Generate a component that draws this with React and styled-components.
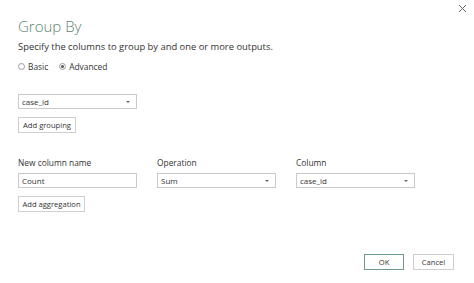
import React from "react";
import styled, { createGlobalStyle } from "styled-components";

const Global = createGlobalStyle`
  html, body { margin: 0; padding: 0; background: #fff; }
  body { font-family: "Open Sans", "Noto Sans", sans-serif; color: #333; }
`;

const Dialog = styled.div`
  position: relative;
  width: 474px;
  height: 283px;
  box-sizing: border-box;
  padding: 16px 20px 0 18px;
  display: flex;
  flex-direction: column;
  background: #fff;
`;

const Close = styled.button`
  position: absolute;
  top: 2px;
  right: 6px;
  width: 12px;
  height: 12px;
  padding: 0;
  border: 0;
  background: none;
  display: flex;
  align-items: center;
  justify-content: center;
`;

const Title = styled.h1`
  margin: 0;
  font-size: 15px;
  line-height: 20px;
  font-weight: 300;
  color: #5e8370;
`;

const Desc = styled.p`
  margin: 5px 0 0;
  font-size: 9.4px;
  line-height: 12px;
  color: #333;
`;

const RadioRow = styled.div`
  margin-top: 7px;
  display: flex;
  gap: 11px;
  align-items: center;
  height: 12px;
`;

const RadioLabel = styled.label`
  display: flex;
  align-items: center;
  gap: 3px;
  font-size: 8.4px;
  color: #333;
`;

const RadioDot = styled.span`
  width: 5px;
  height: 5px;
  border-radius: 50%;
  border: 1px solid #9a9a9a;
  box-sizing: content-box;
  display: flex;
  align-items: center;
  justify-content: center;
  &::after {
    content: "";
    width: 3px;
    height: 3px;
    border-radius: 50%;
    background: ${(p) => (p.$checked ? "#555" : "transparent")};
  }
`;

const Field = styled.div`
  width: 119px;
  height: 15px;
  box-sizing: border-box;
  border: 1px solid #c9c9c9;
  background: #fff;
  display: flex;
  align-items: center;
  justify-content: space-between;
  padding: 0 6px 0 3px;
  font-size: 8px;
  color: #333;
`;

const Caret = styled.span`
  width: 0;
  height: 0;
  border-left: 2px solid transparent;
  border-right: 2px solid transparent;
  border-top: 2px solid #666;
`;

const Button = styled.button`
  height: 16px;
  box-sizing: border-box;
  border: 1px solid ${(p) => (p.$primary ? "#6f9a85" : "#cfcfcf")};
  background: #fff;
  font-family: inherit;
  font-size: 7.6px;
  color: #333;
  padding: 0;
  white-space: nowrap;
  width: ${(p) => p.$w}px;
  display: flex;
  align-items: center;
  justify-content: center;
  align-self: flex-start;
`;

const GroupSection = styled.div`
  margin-top: 22px;
  display: flex;
  flex-direction: column;
  gap: 8px;
`;

const AggGrid = styled.div`
  margin-top: 24px;
  display: grid;
  grid-template-columns: 119px 119px 119px;
  column-gap: 20px;
  row-gap: 5px;
`;

const Label = styled.div`
  font-size: 8.4px;
  line-height: 11px;
  color: #333;
`;

const AggButtonRow = styled.div`
  margin-top: 8px;
  display: flex;
`;

const Footer = styled.div`
  margin-top: auto;
  margin-bottom: 13px;
  display: flex;
  justify-content: flex-end;
  gap: 9px;
`;

export default function App() {
  return (
    <>
      <Global />
      <Dialog>
        <Close aria-label="Close">
          <svg width="9" height="9" viewBox="0 0 9 9">
            <path d="M1 1 L8 8 M8 1 L1 8" stroke="#666" strokeWidth="1" />
          </svg>
        </Close>
        <Title>Group By</Title>
        <Desc>Specify the columns to group by and one or more outputs.</Desc>
        <RadioRow>
          <RadioLabel>
            <RadioDot />
            Basic
          </RadioLabel>
          <RadioLabel>
            <RadioDot $checked />
            Advanced
          </RadioLabel>
        </RadioRow>
        <GroupSection>
          <Field>
            case_id
            <Caret />
          </Field>
          <Button $w={58}>Add grouping</Button>
        </GroupSection>
        <AggGrid>
          <Label>New column name</Label>
          <Label>Operation</Label>
          <Label>Column</Label>
          <Field>Count</Field>
          <Field>
            Sum
            <Caret />
          </Field>
          <Field>
            case_id
            <Caret />
          </Field>
        </AggGrid>
        <AggButtonRow>
          <Button $w={67}>Add aggregation</Button>
        </AggButtonRow>
        <Footer>
          <Button $primary $w={40}>OK</Button>
          <Button $w={41}>Cancel</Button>
        </Footer>
      </Dialog>
    </>
  );
}
